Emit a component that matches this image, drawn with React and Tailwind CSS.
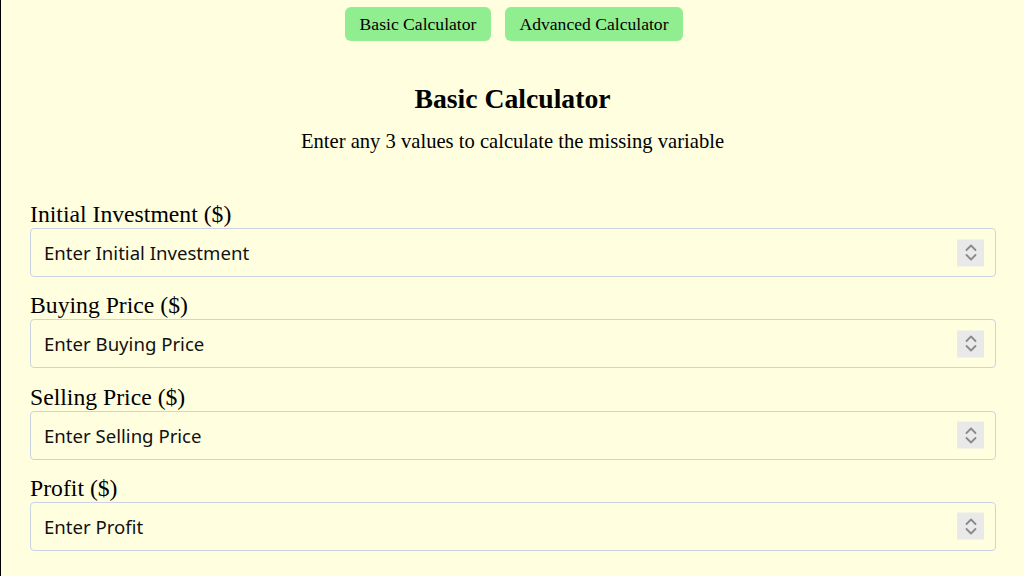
import React from "react";

const fields = [
  { label: "Initial Investment ($)", placeholder: "Enter Initial Investment" },
  { label: "Buying Price ($)", placeholder: "Enter Buying Price" },
  { label: "Selling Price ($)", placeholder: "Enter Selling Price" },
  { label: "Profit ($)", placeholder: "Enter Profit" },
];

function Spinner() {
  return (
    <div className="absolute right-[12px] top-1/2 -translate-y-1/2 w-[27px] h-[27px] bg-[#e9e9e9] flex items-center justify-center">
      <svg width="14" height="20" viewBox="0 0 14 20" fill="none" stroke="#8a8a8a" strokeWidth="1.8" strokeLinecap="round" strokeLinejoin="round">
        <path d="M2.5 7.5 L7 3 L11.5 7.5" />
        <path d="M2.5 12.5 L7 17 L11.5 12.5" />
      </svg>
    </div>
  );
}

export default function App() {
  return (
    <div className="min-h-[576px] bg-[#ffffe0] border-l border-black font-['Liberation_Serif',serif] text-black">
      <div className="flex justify-center gap-[14px] pt-[7px] pl-[3px]">
        <button className="h-[34px] w-[146px] bg-[#90ee90] rounded-[6px] text-[17.6px]">Basic Calculator</button>
        <button className="h-[34px] w-[178px] bg-[#90ee90] rounded-[6px] text-[17.6px]">Advanced Calculator</button>
      </div>

      <h2 className="text-center font-bold text-[27.7px] mt-[42px] leading-[32px]">Basic Calculator</h2>
      <p className="text-center text-[20.6px] mt-[14px] leading-[24px]">Enter any 3 values to calculate the missing variable</p>

      <div className="pl-[29px] pr-[28px] mt-[47px] flex flex-col gap-[14.3px]">
        {fields.map((f) => (
          <div key={f.label} className="flex flex-col">
            <label className="text-[23.7px] leading-[28px]">{f.label}</label>
            <div className="relative">
              <input
                type="text"
                placeholder={f.placeholder}
                className="w-full h-[49px] border border-[#c9d3e3] rounded-[4px] bg-transparent pl-[13px] font-['Noto_Sans',sans-serif] text-[18.6px] placeholder:text-[#111] outline-none"
              />
              <Spinner />
            </div>
          </div>
        ))}
      </div>
    </div>
  );
}
